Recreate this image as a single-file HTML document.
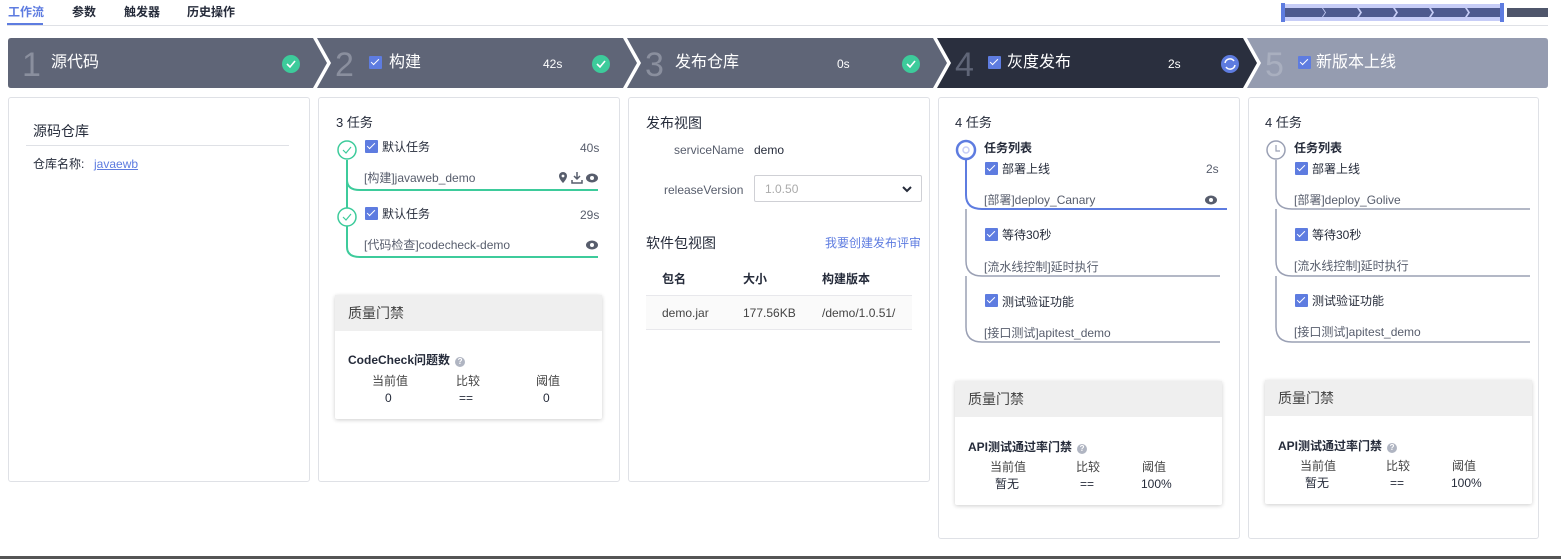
<!DOCTYPE html>
<html><head><meta charset="utf-8"><style>
*{margin:0;padding:0;box-sizing:border-box}
body{width:1561px;height:559px;background:#fff;position:relative;overflow:hidden;font-family:"Liberation Sans","Noto Sans CJK SC",sans-serif;color:#252b3a;font-size:12px}
.a{position:absolute;white-space:nowrap;line-height:1}
.panel{position:absolute;border:1px solid #dfe1e6;border-radius:3px;background:#fff}
.cb{position:absolute;width:13px;height:13px;background:#5e7ce0;border-radius:1px}
.cb:after{content:"";position:absolute;left:4px;top:1px;width:3px;height:7px;border:solid #fff;border-width:0 1.5px 1.5px 0;transform:rotate(45deg)}
.gate{position:absolute;background:#fff;box-shadow:0 1px 4px rgba(0,0,0,.2);border-radius:2px}
.gate .h{height:36px;background:#efefef;font-size:14px;padding:11px 13px;color:#444;line-height:1}
.q{display:inline-block;width:10px;height:10px;border-radius:50%;background:#b0b5c2;color:#fff;font-size:8px;text-align:center;line-height:10px;margin-left:5px;vertical-align:0}
.sn{font-size:34px;color:#8a8f9e;font-family:"Liberation Sans",sans-serif}
.st{font-size:16px;color:#fff}
.t{font-size:12px;color:#252b3a}
.tab{font-weight:bold}
</style></head><body>
<!-- tabs -->
<div class="a tab" style="left:8px;top:6px;color:#5e7ce0">工作流</div>
<div class="a" style="left:7px;top:23px;width:36px;height:2px;background:#5e7ce0"></div>
<div class="a tab" style="left:72px;top:6px">参数</div>
<div class="a tab" style="left:124px;top:6px">触发器</div>
<div class="a tab" style="left:187px;top:6px">历史操作</div>
<div class="a" style="left:7px;top:25px;width:1541px;height:1px;background:#dfe1e6"></div>
<!-- minimap -->
<svg class="a" style="left:1280px;top:3px" width="270" height="20">
<rect x="3" y="1" width="220" height="17" fill="#c7cdf7"/>
<rect x="1" y="0" width="4" height="19" fill="#5e7ce0"/><rect x="220" y="0" width="4" height="19" fill="#5e7ce0"/>
<g fill="#4e5a8f"><path d="M5,5h37l3,4.5l-3,4.5h-37z"/><path d="M43,5h34l3,4.5l-3,4.5h-34l3,-4.5z"/><path d="M79,5h34l3,4.5l-3,4.5h-34l3,-4.5z"/><path d="M115,5h34l3,4.5l-3,4.5h-34l3,-4.5z"/><path d="M151,5h34l3,4.5l-3,4.5h-34l3,-4.5z"/><path d="M187,5h33v9h-33l3,-4.5z"/></g>
<rect x="227" y="5" width="41" height="9" fill="#4f566b"/>
</svg>
<!-- stage bar -->
<svg class="a" style="left:0;top:38px" width="1561" height="52">
<path d="M11,0H313L327,25L313,50H11Q8,50 8,47V3Q8,0 11,0z" fill="#5f6577"/>
<path d="M317,0H623L637,25L623,50H317L331,25z" fill="#5f6577"/>
<path d="M627,0H933L947,25L933,50H627L641,25z" fill="#5f6577"/>
<path d="M937,0H1243L1257,25L1243,50H937L951,25z" fill="#2a2f3e"/>
<path d="M1247,0H1545Q1548,0 1548,3V47Q1548,50 1545,50H1247L1261,25z" fill="#959cb0"/>
<g fill="#3dcb9b"><circle cx="291" cy="26" r="9"/><circle cx="601" cy="26" r="9"/><circle cx="911" cy="26" r="9"/></g>
<g stroke="#fff" stroke-width="1.6" fill="none"><path d="M287,26l3,3l5,-6"/><path d="M597,26l3,3l5,-6"/><path d="M907,26l3,3l5,-6"/></g>
<circle cx="1230" cy="26" r="9" fill="#5e7ce0"/>
<path d="M1225,25a5,5 0 0 1 9,-2M1235,27a5,5 0 0 1 -9,2" stroke="#fff" stroke-width="1.5" fill="none"/>
</svg>
<div class="a sn" style="left:22px;top:48px">1</div>
<div class="a st" style="left:51px;top:55px">源代码</div>
<div class="a sn" style="left:335px;top:48px">2</div>
<div class="cb" style="left:369px;top:56px"></div>
<div class="a st" style="left:389px;top:55px">构建</div>
<div class="a" style="left:543px;top:58px;color:#fff">42s</div>
<div class="a sn" style="left:645px;top:48px">3</div>
<div class="a st" style="left:675px;top:55px">发布仓库</div>
<div class="a" style="left:837px;top:58px;color:#fff">0s</div>
<div class="a sn" style="left:955px;top:48px;color:#5f6577">4</div>
<div class="cb" style="left:988px;top:56px"></div>
<div class="a st" style="left:1007px;top:55px">灰度发布</div>
<div class="a" style="left:1168px;top:58px;color:#fff">2s</div>
<div class="a sn" style="left:1265px;top:48px;color:#a9afbf">5</div>
<div class="cb" style="left:1298px;top:56px"></div>
<div class="a st" style="left:1316px;top:55px">新版本上线</div>

<!-- panel1 -->
<div class="panel" style="left:8px;top:97px;width:302px;height:385px"></div>
<div class="a" style="left:33px;top:124px;font-size:14px">源码仓库</div>
<div class="a" style="left:26px;top:145px;width:263px;height:1px;background:#dfe1e6"></div>
<div class="a" style="left:33px;top:158px">仓库名称:</div>
<div class="a" style="left:94px;top:158px;color:#5e7ce0;text-decoration:underline">javaewb</div>

<!-- panel2 -->
<div class="panel" style="left:318px;top:97px;width:302px;height:385px"></div>
<div class="a" style="left:336px;top:116px;font-size:13px">3 任务</div>
<svg class="a" style="left:330px;top:135px" width="280" height="130">
<g stroke="#3dcb9b" stroke-width="2" fill="none">
<path d="M17,25V45Q17,55 30,55H268"/>
<path d="M17,25V91"/>
<path d="M17,91V112Q17,122 30,122H268"/>
</g>
<circle cx="17" cy="15" r="9" fill="#fff" stroke="#3dcb9b" stroke-width="1.5"/>
<circle cx="17" cy="82" r="9" fill="#fff" stroke="#3dcb9b" stroke-width="1.5"/>
<path d="M13,15l3,3l5,-6M13,82l3,3l5,-6" stroke="#3dcb9b" stroke-width="1.2" fill="none"/>
</svg>
<div class="cb" style="left:365px;top:140px"></div>
<div class="a t" style="left:382px;top:141px">默认任务</div>
<div class="a" style="left:580px;top:142px;color:#575d6c">40s</div>
<div class="a" style="left:364px;top:172px;color:#575d6c">[构建]javaweb_demo</div>
<svg class="a" style="left:558px;top:171px" width="42" height="14" fill="#575d6c"><path d="M5,1a4,4 0 0 1 4,4c0,3 -4,7 -4,7s-4,-4 -4,-7a4,4 0 0 1 4,-4z"/><circle cx="5" cy="5" r="1.4" fill="#fff"/><path d="M19,1v7M16,5l3,3l3,-3M14,9v3h10v-3" stroke="#575d6c" stroke-width="1.5" fill="none"/><ellipse cx="34" cy="7" rx="6" ry="4.5"/><circle cx="34" cy="7" r="2" fill="#fff"/></svg>
<div class="cb" style="left:365px;top:207px"></div>
<div class="a t" style="left:382px;top:208px">默认任务</div>
<div class="a" style="left:580px;top:209px;color:#575d6c">29s</div>
<div class="a" style="left:364px;top:239px;color:#575d6c">[代码检查]codecheck-demo</div>
<svg class="a" style="left:585px;top:238px" width="14" height="14" fill="#575d6c"><ellipse cx="7" cy="7" rx="6" ry="4.5"/><circle cx="7" cy="7" r="2" fill="#fff"/></svg>
<div class="gate" style="left:335px;top:295px;width:267px;height:124px"><div class="h">质量门禁</div></div>
<div class="a" style="left:348px;top:354px;font-weight:bold">CodeCheck问题数<span class="q">?</span></div>
<div class="a" style="left:372px;top:375px;color:#444">当前值</div><div class="a" style="left:385px;top:392px">0</div>
<div class="a" style="left:456px;top:375px;color:#444">比较</div><div class="a" style="left:459px;top:392px">==</div>
<div class="a" style="left:536px;top:375px;color:#444">阈值</div><div class="a" style="left:543px;top:392px">0</div>

<!-- panel3 -->
<div class="panel" style="left:628px;top:97px;width:302px;height:385px"></div>
<div class="a" style="left:646px;top:116px;font-size:14px">发布视图</div>
<div class="a" style="left:674px;top:144px;color:#575d6c">serviceName</div>
<div class="a" style="left:754px;top:144px">demo</div>
<div class="a" style="left:664px;top:184px;color:#575d6c">releaseVersion</div>
<div class="a" style="left:754px;top:175px;width:168px;height:27px;border:1px solid #cfd0d5;border-radius:2px;color:#aaa;padding:7px 10px">1.0.50</div>
<svg class="a" style="left:902px;top:186px" width="10" height="7"><path d="M1,1l4,4l4,-4" stroke="#252b3a" stroke-width="2" fill="none"/></svg>
<div class="a" style="left:646px;top:236px;font-size:14px">软件包视图</div>
<div class="a" style="left:825px;top:237px;color:#5e7ce0">我要创建发布评审</div>
<div class="a" style="left:662px;top:273px;font-weight:bold">包名</div>
<div class="a" style="left:743px;top:273px;font-weight:bold">大小</div>
<div class="a" style="left:822px;top:273px;font-weight:bold">构建版本</div>
<div class="a" style="left:646px;top:295px;width:266px;height:35px;background:#fafafa;border-top:1px solid #e8e8ec;border-bottom:1px solid #e8e8ec"></div>
<div class="a" style="left:662px;top:307px;color:#444">demo.jar</div>
<div class="a" style="left:743px;top:307px;color:#444">177.56KB</div>
<div class="a" style="left:822px;top:307px;color:#444">/demo/1.0.51/</div>

<!-- panel4 -->
<div class="panel" style="left:938px;top:97px;width:302px;height:442px"></div>
<div class="a" style="left:955px;top:116px;font-size:13px">4 任务</div>
<svg class="a" style="left:950px;top:135px" width="285" height="215">
<path d="M16,25V60Q16,74 32,74H277" stroke="#5e7ce0" stroke-width="2" fill="none"/>
<path d="M16,74V126Q16,141 32,141H270M16,141V192Q16,207 32,207H270" stroke="#9aa0b4" stroke-width="1.5" fill="none"/>
<circle cx="16" cy="15" r="9" fill="#fff" stroke="#5e7ce0" stroke-width="2.5"/>
<circle cx="16" cy="15" r="3" fill="none" stroke="#c7cdf7" stroke-width="1.5"/>
</svg>
<div class="a" style="left:984px;top:142px;font-weight:bold">任务列表</div>
<div class="cb" style="left:985px;top:162px"></div>
<div class="a t" style="left:1002px;top:163px">部署上线</div>
<div class="a" style="left:1206px;top:163px;color:#575d6c">2s</div>
<div class="a" style="left:984px;top:194px;color:#575d6c">[部署]deploy_Canary</div>
<svg class="a" style="left:1204px;top:193px" width="14" height="14" fill="#575d6c"><ellipse cx="7" cy="7" rx="6" ry="4.5"/><circle cx="7" cy="7" r="2" fill="#fff"/></svg>
<div class="cb" style="left:985px;top:228px"></div>
<div class="a t" style="left:1002px;top:229px">等待30秒</div>
<div class="a" style="left:984px;top:261px;color:#575d6c">[流水线控制]延时执行</div>
<div class="cb" style="left:985px;top:294px"></div>
<div class="a t" style="left:1002px;top:296px">测试验证功能</div>
<div class="a" style="left:984px;top:327px;color:#575d6c">[接口测试]apitest_demo</div>
<div class="gate" style="left:955px;top:381px;width:267px;height:124px"><div class="h">质量门禁</div></div>
<div class="a" style="left:968px;top:441px;font-weight:bold">API测试通过率门禁<span class="q">?</span></div>
<div class="a" style="left:990px;top:461px;color:#444">当前值</div><div class="a" style="left:995px;top:478px">暂无</div>
<div class="a" style="left:1076px;top:461px;color:#444">比较</div><div class="a" style="left:1080px;top:478px">==</div>
<div class="a" style="left:1142px;top:461px;color:#444">阈值</div><div class="a" style="left:1141px;top:478px">100%</div>

<!-- panel5 -->
<div class="panel" style="left:1248px;top:97px;width:291px;height:442px"></div>
<div class="a" style="left:1265px;top:116px;font-size:13px">4 任务</div>
<svg class="a" style="left:1260px;top:135px" width="275" height="215">
<path d="M16,25V60Q16,74 32,74H270M16,74V126Q16,141 32,141H270M16,141V192Q16,207 32,207H270" stroke="#9aa0b4" stroke-width="1.5" fill="none"/>
<circle cx="16" cy="15" r="9" fill="#fff" stroke="#9aa0b4" stroke-width="1.5"/>
<path d="M16,10v6h4" stroke="#9aa0b4" stroke-width="1.2" fill="none"/>
</svg>
<div class="a" style="left:1294px;top:142px;font-weight:bold">任务列表</div>
<div class="cb" style="left:1295px;top:162px"></div>
<div class="a t" style="left:1312px;top:163px">部署上线</div>
<div class="a" style="left:1294px;top:194px;color:#575d6c">[部署]deploy_Golive</div>
<div class="cb" style="left:1295px;top:228px"></div>
<div class="a t" style="left:1312px;top:229px">等待30秒</div>
<div class="a" style="left:1294px;top:260px;color:#575d6c">[流水线控制]延时执行</div>
<div class="cb" style="left:1295px;top:294px"></div>
<div class="a t" style="left:1312px;top:295px">测试验证功能</div>
<div class="a" style="left:1294px;top:326px;color:#575d6c">[接口测试]apitest_demo</div>
<div class="gate" style="left:1265px;top:380px;width:267px;height:124px"><div class="h">质量门禁</div></div>
<div class="a" style="left:1278px;top:440px;font-weight:bold">API测试通过率门禁<span class="q">?</span></div>
<div class="a" style="left:1300px;top:460px;color:#444">当前值</div><div class="a" style="left:1305px;top:477px">暂无</div>
<div class="a" style="left:1386px;top:460px;color:#444">比较</div><div class="a" style="left:1390px;top:477px">==</div>
<div class="a" style="left:1452px;top:460px;color:#444">阈值</div><div class="a" style="left:1451px;top:477px">100%</div>

<div class="a" style="left:0;top:556px;width:1561px;height:3px;background:#555"></div>
</body></html>
